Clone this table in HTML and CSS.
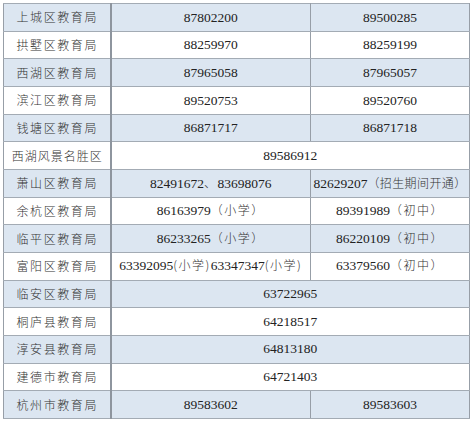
FILE: index.html
```html
<!DOCTYPE html>
<html lang="zh-CN">
<head>
<meta charset="utf-8">
<title>杭州市教育局电话</title>
<link rel="stylesheet" href="styles.css">
</head>
<body>
<table class="phones">
  <colgroup><col class="c1"><col class="c2"><col class="c3"></colgroup>
  <tbody>
    <tr class="blue"><td class="name">上城区教育局</td><td>87802200</td><td>89500285</td></tr>
    <tr><td class="name">拱墅区教育局</td><td>88259970</td><td>88259199</td></tr>
    <tr class="blue"><td class="name">西湖区教育局</td><td>87965058</td><td>87965057</td></tr>
    <tr><td class="name">滨江区教育局</td><td>89520753</td><td>89520760</td></tr>
    <tr class="blue"><td class="name">钱塘区教育局</td><td>86871717</td><td>86871718</td></tr>
    <tr><td class="name narrow">西湖风景名胜区</td><td colspan="2">89586912</td></tr>
    <tr class="blue"><td class="name">萧山区教育局</td><td>82491672<span class="zh">、</span>83698076</td><td>82629207<span class="zh tight">（招生期间开通）</span></td></tr>
    <tr><td class="name">余杭区教育局</td><td>86163979<span class="zh">（小学）</span></td><td>89391989<span class="zh">（初中）</span></td></tr>
    <tr class="blue"><td class="name">临平区教育局</td><td>86233265<span class="zh">（小学）</span></td><td>86220109<span class="zh">（初中）</span></td></tr>
    <tr><td class="name">富阳区教育局</td><td>63392095<span class="zh half">(小学)</span>63347347<span class="zh half">(小学)</span></td><td>63379560<span class="zh">（初中）</span></td></tr>
    <tr class="blue"><td class="name">临安区教育局</td><td colspan="2">63722965</td></tr>
    <tr><td class="name">桐庐县教育局</td><td colspan="2">64218517</td></tr>
    <tr class="blue"><td class="name">淳安县教育局</td><td colspan="2">64813180</td></tr>
    <tr><td class="name">建德市教育局</td><td colspan="2">64721403</td></tr>
    <tr class="blue"><td class="name">杭州市教育局</td><td>89583602</td><td>89583603</td></tr>
  </tbody>
</table>
</body>
</html>
```
FILE: styles.css
```css
html, body {
  margin: 0;
  padding: 0;
  background: #ffffff;
}
body {
  padding: 3px 0 0 3px;
}
.phones {
  border-collapse: collapse;
  table-layout: fixed;
  width: 466px;
  font-family: "Liberation Serif", "Noto Sans CJK SC", serif;
  font-size: 13.5px;
  color: #222222;
  border: 1px solid #a3abb4;
}
.c1 { width: 107px; }
.c2 { width: 200px; }
.c3 { width: 159px; }
.phones td {
  height: 26.67px;
  padding: 0;
  text-align: center;
  vertical-align: middle;
  white-space: nowrap;
  border-top: 1px solid #a3abb4;
  border-bottom: 1px solid #a3abb4;
  border-left: 1px solid #979ea7;
  border-right: 1px solid #979ea7;
  line-height: 1;
}
.phones td.name {
  font-family: "Noto Sans CJK SC", sans-serif;
  font-size: 12px;
  font-weight: 300;
  letter-spacing: 1.6px;
  color: #333333;
  border-right: 2px solid #8e959e;
  padding-left: 1px;
}
.phones td.narrow {
  letter-spacing: 1px;
}
.zh {
  font-family: "Noto Sans CJK SC", sans-serif;
  font-size: 12px;
  font-weight: 300;
  letter-spacing: 1.5px;
  color: #333333;
}
.zh.tight {
  letter-spacing: 0.4px;
}
.zh.half {
  letter-spacing: 1.5px;
}
.blue td {
  background: #dce6f1;
}
```
